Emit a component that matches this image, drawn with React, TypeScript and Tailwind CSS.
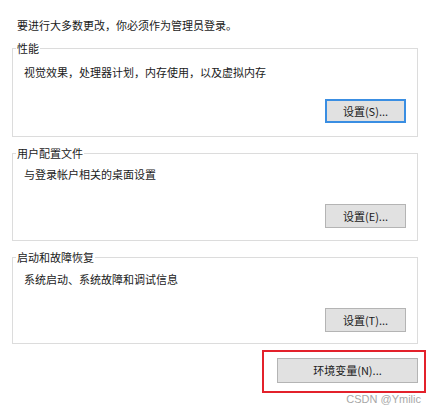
const font = { fontFamily: '"Noto Sans CJK SC", "Noto Sans", sans-serif' };

interface Group {
  title: string;
  desc: string;
  button: string;
  descMt: string;
  btnMt: string;
  pb: string;
  focused?: boolean;
}

const GROUPS: Group[] = [
  {
    title: "性能",
    desc: "视觉效果，处理器计划，内存使用，以及虚拟内存",
    button: "设置(S)...",
    descMt: "mt-[8px]",
    btnMt: "mt-[19px]",
    pb: "pb-[13px]",
    focused: true,
  },
  {
    title: "用户配置文件",
    desc: "与登录帐户相关的桌面设置",
    button: "设置(E)...",
    descMt: "mt-[5px]",
    btnMt: "mt-[22px]",
    pb: "pb-[12px]",
  },
  {
    title: "启动和故障恢复",
    desc: "系统启动、系统故障和调试信息",
    button: "设置(T)...",
    descMt: "mt-[6px]",
    btnMt: "mt-[21px]",
    pb: "pb-[11px]",
  },
];

function GroupBox({ g }: { g: Group }) {
  return (
    <fieldset className={`mt-[8px] first:mt-[7px] w-[406px] border border-[#dcdcdc] ${g.pb}`}>
      <legend className="ml-[3px] px-[1px] text-[11px] leading-[16px] text-[#1a1a1a]">
        {g.title}
      </legend>
      <p className={`${g.descMt} pl-[11px] text-[11px] leading-[16px] text-[#1a1a1a]`}>{g.desc}</p>
      <div className={`${g.btnMt} flex justify-end pr-[11px]`}>
        <button
          type="button"
          className={`flex h-[24px] w-[81px] items-center justify-center bg-[#e1e1e1] text-[11px] text-[#1a1a1a] ${
            g.focused ? "border-2 border-[#3a8ee2]" : "border border-[#b4b4b4]"
          }`}
        >
          {g.button}
        </button>
      </div>
    </fieldset>
  );
}

export default function App() {
  return (
    <div className="relative h-[413px] w-[436px] overflow-hidden bg-white pl-[12px] pt-[17px]" style={font}>
      <p className="pl-[5px] text-[11px] leading-[16px] text-[#1a1a1a]">
        要进行大多数更改，你必须作为管理员登录。
      </p>

      <div className="flex flex-col">
        {GROUPS.map((g) => (
          <GroupBox key={g.title} g={g} />
        ))}
      </div>

      <div className="mt-[6px] flex w-[414px] justify-end">
        <div className="border-2 border-[#e3212b] pb-[8px] pl-[13px] pr-[6px] pt-[6px]">
          <button
            type="button"
            className="flex h-[25px] w-[141px] items-center justify-center border border-[#b4b4b4] bg-[#e1e1e1] text-[11px] text-[#1a1a1a]"
          >
            环境变量(N)...
          </button>
        </div>
      </div>

      <span
        className="absolute bottom-[8px] right-[15px] text-[11px] leading-[12px] text-[#a8a8a8]"
        style={{ fontFamily: '"Liberation Sans", Arial, sans-serif' }}
      >
        CSDN @Ymilic
      </span>
    </div>
  );
}
